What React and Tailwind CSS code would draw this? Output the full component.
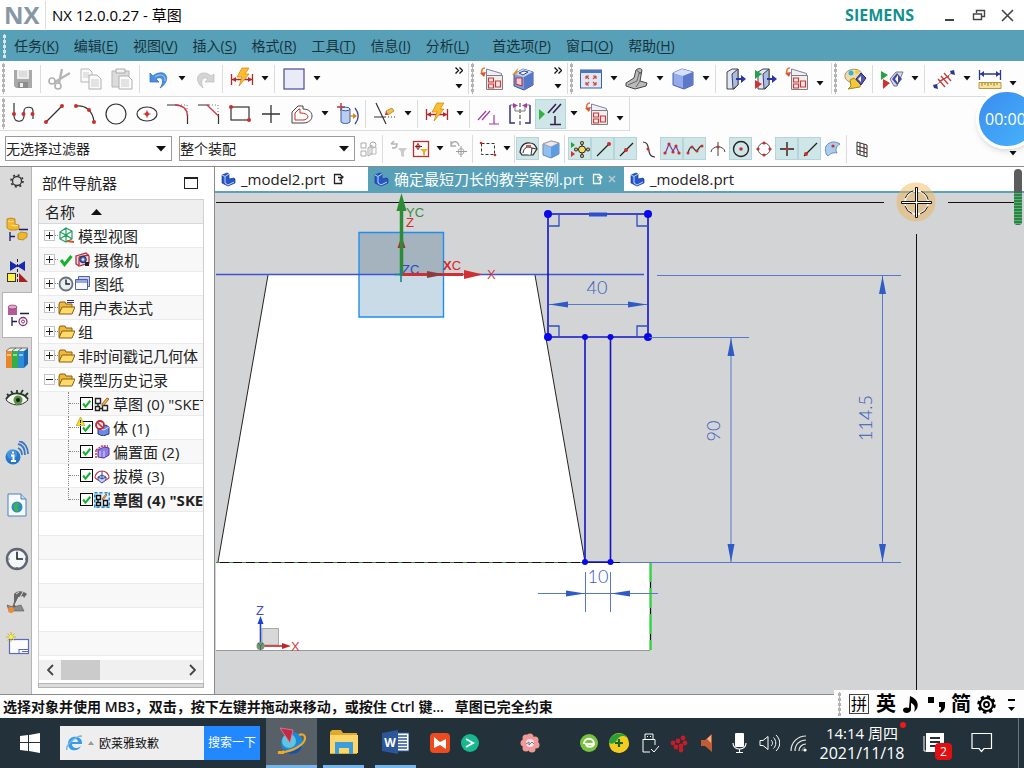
import React, { useState } from "react";
import clsx from "clsx";

// ---------- shared icon pieces ----------

const Ic = ({ s = 24, children }) => (
  <svg width={s} height={s} viewBox={`0 0 ${s} ${s}`} fill="none" className="shrink-0">
    {children}
  </svg>
);

const Dots = ({ at, r = 2, fill = "#c9302c" }) =>
  at.map(([x, y], i) => <circle key={i} cx={x} cy={y} r={r} fill={fill} />);

const Caret = () => (
  <svg width="8" height="5" viewBox="0 0 8 5">
    <path d="M0.5 0h7L4 4.5z" fill="#111" />
  </svg>
);

const SaveIcon = () => (
  <Ic>
    <path d="M3 3h18v18H5l-2-2z" fill="#a9a9a9" />
    <path d="M6 3h12v9H6z" fill="#ececec" />
    <path d="M8 5h8M8 7h8M8 9h8" stroke="#ccc" />
    <path d="M7 15h10v6H7z" fill="#8c8c8c" />
    <path d="M9 16h3v4H9z" fill="#eee" />
  </Ic>
);
const CutIcon = () => (
  <Ic>
    <path d="M22 6L7 15M14 2l-3 14" stroke="#b5b5b5" strokeWidth="2.4" />
    <circle cx="4" cy="14" r="3" stroke="#b0b0b0" strokeWidth="1.6" />
    <circle cx="10" cy="19" r="3" stroke="#b0b0b0" strokeWidth="1.6" />
  </Ic>
);
const CopyIcon = () => (
  <Ic>
    <path d="M2 2h8l3 3v10H2z" fill="#fafafa" stroke="#b8b8b8" />
    <path d="M4 6h6M4 8h6M4 10h6" stroke="#ccc" />
    <path d="M10 8h8l4 4v10H10z" fill="#fafafa" stroke="#b0b0b0" />
    <path d="M12 13h8M12 15h8M12 17h8M12 19h8" stroke="#ccc" />
  </Ic>
);
const PasteIcon = () => (
  <Ic>
    <path d="M2 4h17v16H2z" fill="#dcdcdc" stroke="#b5b5b5" />
    <path d="M6 2h9v4H6z" fill="#f2f2f2" stroke="#aaa" />
    <path d="M9 9h9l4 4v9H9z" fill="#fafafa" stroke="#b0b0b0" />
    <path d="M11 13h8M11 15h8M11 17h8M11 19h8" stroke="#ccc" />
  </Ic>
);
const UndoIcon = () => (
  <Ic>
    <path d="M3 6v9h9l-3-3c6-4 9 2 4 9 10-6 8-17-1-15-3 .5-5 2-6 3z" fill="#4a90e0" stroke="#2c68b8" strokeWidth=".7" />
    <path d="M8 10c5-4 11-2 10 4" stroke="#a9d0f5" />
  </Ic>
);
const RedoIcon = () => (
  <Ic>
    <path d="M21 7v8h-9l3-3c-5-3-8 1-5 9C1 14 4 5 12 6c3 .3 5 2 6 3z" fill="#d4d4d4" stroke="#bbb" strokeWidth=".7" />
  </Ic>
);
const RapidDimIcon = () => (
  <Ic>
    <path d="M1.500 7v11M22.500 7v11M2 12.500h20" stroke="#b02a2a" strokeWidth="1.3" />
    <path d="M2 12.500l4-2.500v5zM22 12.500l-4-2.500v5z" fill="#b02a2a" />
    <path d="M12 1h7l-4 6h4L9 19l3-9H7z" fill="#f8c030" stroke="#d88a18" strokeWidth=".8" />
  </Ic>
);
const SquareIcon = () => (
  <Ic>
    <rect x="2" y="2" width="20" height="20" fill="#e9ecf6" stroke="#4b4b96" strokeWidth="1.2" />
  </Ic>
);
const SheetIcon = () => (
  <Ic>
    <path d="M6.500 9V2l15 4.500v3" stroke="#8a7ab0" fill="#efeff4" />
    <path d="M6.500 8.500h16v14h-16z" fill="#efefef" stroke="#808080" />
    <path d="M8.500 11h5v4h-5zM15.500 14h5v6h-5zM8.500 17h5v4h-5z" stroke="#c63a3a" fill="#fbe6e6" strokeWidth="1.2" />
    <path d="M5 1C2 1 1 4 2 7" stroke="#e07a3a" strokeWidth="1.600" />
    <path d="M0 6l6-1-2 5z" fill="#d9542b" />
  </Ic>
);
const BlockIcon = () => (
  <Ic>
    <path d="M3 7l9-5 10 3v13l-9 5-10-4z" fill="#7d9fe0" stroke="#3b559f" />
    <path d="M3 7l10 3 9-5-10-3z" fill="#c9d9f7" />
    <path d="M8 6l5-2 4 1-5 3z" fill="#f8faff" stroke="#33477f" />
    <path d="M13 10v13l9-5V5z" fill="#5778c6" />
    <path d="M5 11h6v8l-6-2z" stroke="#c33" fill="#e6d3e2" strokeWidth="1.2" />
    <path d="M1 8l6-7-1 6z" fill="#e8902c" />
  </Ic>
);
const FitIcon = () => (
  <Ic>
    <rect x="1.500" y="3" width="21" height="18" fill="#dfe8f8" stroke="#3e5f9c" />
    <path d="M1 3h22v3H1z" fill="#4877c0" />
    <path d="M7 9h3M7 9v3M17 9h-3M17 9v3M7 18h3M7 18v-3M17 18h-3M17 18v-3M7 9l3 3M17 9l-3 3M7 18l3-3M17 18l-3-3" stroke="#cf4a32" strokeWidth="1.200" />
  </Ic>
);
const OrientIcon = () => (
  <Ic>
    <path d="M1 16l8-5 2-8c3-2 5-2 6 0l-2 11 7 2-1 3-11 3-9-3z" fill="#b9bcb9" stroke="#444" />
    <path d="M12 4c2 0 2 1 2 2l-2 8-9 4M15 14l-4 6" stroke="#666" />
    <circle cx="15" cy="6" r="1" fill="#555" />
  </Ic>
);
const CubeIcon = () => (
  <Ic>
    <path d="M2 6l9-4 11 3v13l-9 4-11-4z" fill="#93abea" stroke="#4a5fa8" />
    <path d="M2 6l10 3 10-4-11-3z" fill="#d6e0fa" />
    <path d="M12 9v13l10-4V5z" fill="#5d78c8" />
  </Ic>
);
const PlateOutIcon = ({ flag }) => (
  <Ic>
    <path d="M4 5l5-3h6v16l-4 4H4z" fill="#dfe6f6" stroke="#444" />
    <path d="M9 7l6-5v16l-5 4z" fill="#a9bbe6" stroke="#444" />
    <path d="M13 12h6" stroke="#2a35a8" strokeWidth="2" />
    <path d="M18 8l5 4-5 4z" fill="#2a35a8" />
    {flag && <path d="M1 3l7 4-7 5z" fill="#25a245" />}
    {flag && <path d="M1 13l7 4-7 5z" fill="#c33" />}
  </Ic>
);
const PaletteIcon = () => (
  <Ic>
    <path d="M2 8C3 1 17 0 19 7c0 5-6 4-7 7-1 2-6 2-8-1-2-1-2-3-2-5z" fill="#eedcb0" stroke="#ae9464" />
    <circle cx="8" cy="6" r="2.500" fill="#38b0d0" />
    <circle cx="14" cy="5" r="2" fill="#e8d030" />
    <path d="M5 22l3-3-1-6 4-2 4 4 4-3-2 8z" fill="#f0c838" stroke="#a88420" />
    <path d="M13 12l5-6 5 5-5 7z" fill="#5558b0" stroke="#222a66" />
    <path d="M15 12l3-3v6z" fill="#fff" />
  </Ic>
);
const SectionIcon = () => (
  <Ic>
    <path d="M10 12l6-7h7l-6 14h-3z" fill="#d8dbf0" stroke="#777" />
    <path d="M12 12l5-6 5 6-5 6z" fill="#4449a0" />
    <path d="M15 12l3-4v8z" fill="#fff" />
    <path d="M1 4l7 4-7 5z" fill="#25a245" />
    <path d="M3 12l7 4-7 6z" fill="#c33" />
  </Ic>
);
const MeasureIcon = () => (
  <Ic>
    <path d="M3 19L21 5" stroke="#888" />
    <path d="M6 12l7 8M9 9l7 8M12 6l7 8M8 14l9-5" stroke="#cc3838" strokeWidth="1.3" />
    <path d="M1 18l4-1 1 5-4-1zM18 4l4-1 1 5-4-1z" fill="#2b3890" />
  </Ic>
);
const RulerIcon = () => (
  <Ic>
    <path d="M1.500 3v10M22.500 3v10M2 7h20" stroke="#2b3890" strokeWidth="1.300" />
    <path d="M2 7l4-3v6zM22 7l-4-3v6z" fill="#2b3890" />
    <path d="M1 15.500h22v6H1z" fill="#f5e3a0" stroke="#b99a40" />
    <path d="M4 16v3M7 16v2M10 16v3M13 16v2M16 16v3M19 16v2" stroke="#a07c28" />
  </Ic>
);

// sketch tools
const ProfileIcon = () => (
  <Ic>
    <path d="M3 1v13c0 7 10 7 10 0V9c0-5 9-5 9 0v8" stroke="#333" strokeWidth="1.200" />
    <Dots at={[[3, 12], [12.500, 12], [21.500, 12]]} />
  </Ic>
);
const LineIcon = () => (
  <Ic>
    <path d="M4 20L20 4" stroke="#333" strokeWidth="1.200" />
    <Dots at={[[4, 20], [20, 4]]} />
  </Ic>
);
const ArcIcon = () => (
  <Ic>
    <path d="M3 4c10-1 17 5 18 16" stroke="#333" strokeWidth="1.200" />
    <Dots at={[[3, 4], [16, 8], [21, 20]]} />
  </Ic>
);
const CircleIcon = () => (
  <Ic>
    <circle cx="12" cy="12" r="10" stroke="#333" strokeWidth="1.200" />
  </Ic>
);
const EllipseIcon = () => (
  <Ic>
    <ellipse cx="12" cy="12" rx="10" ry="7" stroke="#333" strokeWidth="1.200" />
    <path d="M12 8.500v7M8.500 12h7" stroke="#c9302c" strokeWidth="1.200" />
    <Dots at={[[12, 12]]} />
  </Ic>
);
const CornerIcon = ({ curve }) => (
  <Ic>
    <path d="M1 3h11M21.500 12v10" stroke="#333" strokeWidth="1.200" />
    <path d="M12 3h9v9" stroke="#777" strokeDasharray="1 2" />
    <path d={curve ? "M9 3c8 0 12 3 12.500 11" : "M10 3l11.500 11"} stroke="#cf3b4a" strokeWidth="1.400" />
  </Ic>
);
const RectIcon = () => (
  <Ic>
    <rect x="3" y="5" width="18" height="13" stroke="#333" strokeWidth="1.200" />
    <Dots at={[[3, 5], [21, 18]]} />
  </Ic>
);
const PlusIcon = () => (
  <Ic>
    <path d="M12 3v18M3 12h18" stroke="#333" strokeWidth="1.300" />
  </Ic>
);
const OffsetIcon = () => (
  <Ic>
    <path d="M2 21V10l6-6h5v3c12 0 12 14 0 14z" stroke="#444" />
    <path d="M5 18v-7l4-4h1v4c11 0 9 7 3 7z" stroke="#c9302c" />
  </Ic>
);
const ProjectIcon = () => (
  <Ic>
    <path d="M1 5h8M5 1v8" stroke="#c9302c" strokeWidth="1.400" />
    <path d="M5 7h9v13c-2 2-7 2-9 0z" fill="#b9cdf3" stroke="#3c5ba8" />
    <ellipse cx="9.500" cy="7" rx="4.500" ry="1.800" fill="#e8effc" stroke="#3c5ba8" />
    <path d="M13 14h5" stroke="#d88a18" strokeWidth="1.400" />
    <path d="M17 11l4 3-4 3z" fill="#d88a18" />
    <path d="M19 6c4 5 4 11 0 16" stroke="#38489c" strokeWidth="1.300" />
  </Ic>
);
const TrimIcon = () => (
  <Ic>
    <path d="M3 1l10 21M1 15h11" stroke="#333" strokeWidth="1.200" />
    <path d="M12 15h10" stroke="#333" strokeDasharray="1 2" />
    <path d="M13 9l6-3 2 3-6 4z" fill="#efc445" stroke="#9d7a20" strokeWidth=".7" />
    <path d="M13 9l2 4-3 0z" fill="#c33" />
  </Ic>
);
const ConstraintIcon = ({ dark }) => {
  const c = dark ? "#3d1c52" : "#a63aa8";
  return (
    <Ic>
      {dark ? (
        <>
          <path d="M0 7l6 5-6 6z" fill="#2eb33c" />
          <path d="M9 11l8-9M14 11l8-9M16 14v8M11 22.500h11" stroke={c} strokeWidth="1.600" />
        </>
      ) : (
        <path d="M1 18l8-9M5 18l8-9M17 13v9M12 22h10" stroke={c} strokeWidth="1.200" />
      )}
    </Ic>
  );
};
const SymmetricIcon = () => (
  <Ic>
    <path d="M2 3v18h5M22 3v18h-5M2 4v17M22 4v17" stroke="#33337a" strokeWidth="1.500" />
    <path d="M12 1v22" stroke="#333" strokeDasharray="4 2" />
    <path d="M7 3v6h4M17 3v6h-4M2 3h4M18 3h4" stroke="#777" />
    <path d="M5 1l5 2.500-5 2.500zM19 1l-5 2.500 5 2.500z" fill="#a63aa8" />
  </Ic>
);

// ---------- selection bar icons ----------

const S = ({ children }) => <Ic s={20}>{children}</Ic>;
const FilterCubesIcon = () => (
  <S>
    <path d="M2 4h5v5H2zM2 12h5v5H2zM9 9l4-3v9l-4 2z" stroke="#aaa" />
    <circle cx="14" cy="6" r="3" stroke="#aaa" />
    <path d="M11 8h6v7h-6z" stroke="#bbb" />
  </S>
);
const FilterIcon = () => (
  <S>
    <path d="M3 5h6c0 4-2 4-5 4M3 5l3-3" stroke="#b5b5b5" strokeWidth="1.500" />
    <path d="M10 9h9l-3 4v5l-3-1v-4z" fill="#ccc" />
  </S>
);
const FilterRedIcon = () => (
  <S>
    <rect x="2.500" y="2.500" width="15" height="15" stroke="#b83232" strokeWidth="1.300" fill="#fffafa" />
    <path d="M7 4v7M4 7.500h7" stroke="#333" />
    <circle cx="7" cy="7.500" r="2" stroke="#c33" />
    <path d="M9 10h8l-3 3v4l-2-1v-3z" fill="#eeb02c" />
  </S>
);
const FilterUndoIcon = () => (
  <S>
    <path d="M2 6c2-5 7-4 8 1M2 2v5h5" stroke="#aaa" strokeWidth="1.300" />
    <path d="M12 7v11M7 12.500h11" stroke="#999" />
    <circle cx="12" cy="12.500" r="3" stroke="#aaa" />
  </S>
);
const LassoIcon = () => (
  <S>
    <rect x="3.500" y="4.500" width="13" height="11" stroke="#333" strokeDasharray="3 2" />
    <Dots at={[[3, 4], [17, 16]]} r={1.300} />
  </S>
);
const FaceIcon = () => (
  <S>
    <path d="M2 13c1-7 5-10 10-9 4 0 6 3 7 6l-4 6H4z" fill="#f2f2f2" stroke="#222" strokeWidth="1.200" />
    <path d="M5 14c1-6 5-7 9-5l-1 7M14 9l4 1" fill="#fff" stroke="#333" />
    <path d="M8 7l5 0" stroke="#c33" strokeWidth="1.500" />
  </S>
);
const ShadedIcon = () => (
  <S>
    <path d="M2 5l8-3 8 2v11l-8 4-8-3z" fill="#8cc1f2" stroke="#6b87b0" />
    <path d="M2 5l8 3 8-4-8-2z" fill="#e6ecf4" stroke="#b99" />
    <path d="M10 8v11l8-4V4z" fill="#5c9ce2" />
  </S>
);
const SnapAllIcon = () => (
  <S>
    <path d="M1 3l4 3-4 3z" fill="#2a9c3c" />
    <path d="M1 12l4 3-4 3z" fill="#c33" />
    <path d="M12 3v15M5 10.500h14" stroke="#222" />
    <circle cx="12" cy="10.500" r="3.500" stroke="#222" fill="#f5dc60" />
    <Dots at={[[12, 4], [12, 17], [6, 10.500], [18, 10.500]]} r={2} fill="#333" />
    <Dots at={[[12, 4], [12, 17], [6, 10.500], [18, 10.500]]} r={1} fill="#f1c93a" />
  </S>
);
const SnapLine = ({ at }) => (
  <S>
    <path d="M4 17L17 4" stroke="#222" strokeWidth="1.300" />
    <Dots at={[at]} />
  </S>
);
const SnapCurveIcon = () => (
  <S>
    <path d="M4 3c9 0 2 15 12 15" stroke="#333" strokeWidth="1.200" />
    <Dots at={[[9, 10]]} r={1.500} />
  </S>
);
const SnapPolyIcon = () => (
  <S>
    <path d="M3 15L7 5l4 7 3-5 3 7" stroke="#7a3aa8" strokeWidth="1.200" />
    <Dots at={[[3, 14], [7, 5], [11, 13], [14, 7], [17, 14]]} r={1.600} />
  </S>
);
const SnapSplineIcon = () => (
  <S>
    <path d="M3 14c3-11 6-4 7-3 3 3 4-5 7-4" stroke="#333" strokeWidth="1.300" />
    <Dots at={[[3, 14], [7, 8], [12, 12], [17, 7]]} r={1.500} />
  </S>
);
const SnapCrossIcon = () => (
  <S>
    <path d="M3 13c1-7 13-7 14 0M10 3v14" stroke="#444" />
    <Dots at={[[10, 8]]} r={1.500} />
  </S>
);
const SnapCenterIcon = () => (
  <S>
    <circle cx="10" cy="10" r="7.500" stroke="#222" strokeWidth="1.400" />
    <Dots at={[[10, 10]]} r={1.800} />
  </S>
);
const SnapQuadIcon = () => (
  <S>
    <circle cx="10" cy="10" r="6" stroke="#555" />
    <Dots at={[[10, 4], [10, 16], [4, 10], [16, 10]]} r={1.600} />
  </S>
);
const SnapPointIcon = () => (
  <S>
    <path d="M10 3v14M3 10h14" stroke="#222" strokeWidth="1.400" />
    <Dots at={[[10, 10]]} r={1.600} />
  </S>
);
const SnapFaceIcon = () => (
  <S>
    <path d="M3 7c4-5 9-5 14-2-4 2-5 6-3 9-4-1-7 1-9 3-3-2-3-7-2-10z" fill="#a9cdee" stroke="#6a8cb4" />
    <Dots at={[[10, 7]]} r={1.600} />
  </S>
);
const GridIcon = () => (
  <S>
    <path d="M5 3l10 3v12L5 15zM8 4v12M12 5v12M5 7l10 3M5 11l10 3" stroke="#333" />
    <Dots at={[[12, 9]]} r={1.300} />
  </S>
);

// ---------- toolbar parts ----------

const Grip = () => (
  <div className="ml-0.5 mr-0.5 h-[31px] w-[3px] shrink-0 bg-[radial-gradient(#b4b4b4_1.2px,transparent_1.3px)] bg-[length:3px_5px]" />
);
const Sep = () => <div className="ml-0.5 mr-[3px] h-7 w-px shrink-0 bg-[#dcdcdc]" />;

const Tool = ({ label, on, children }) => (
  <button
    title={label}
    className={clsx(
      "flex h-[30px] w-[31px] shrink-0 items-center justify-center",
      on && "bg-[#cfe6e9] outline outline-1 -outline-offset-1 outline-[#b5d5da]"
    )}
  >
    {children}
  </button>
);
const Snap = ({ label, on, children }) => (
  <button
    title={label}
    className={clsx(
      "flex h-[23px] w-[23px] shrink-0 items-center justify-center",
      on && "bg-[#cfe6e9] outline outline-1 -outline-offset-1 outline-[#b5d5da]"
    )}
  >
    {children}
  </button>
);
const Drop = ({ low }) => (
  <button
    aria-label="more"
    className={clsx("flex h-[30px] w-[15px] shrink-0 items-center justify-center", low && "pt-2.5")}
  >
    <Caret />
  </button>
);
const Overflow = () => (
  <button aria-label="overflow" className="ml-auto flex h-7 w-[19px] flex-col items-center justify-between pb-1 pt-0.5">
    <svg width="8" height="7" viewBox="0 0 8 7" fill="none">
      <path d="M0.500 0.500l3 3-3 3M4.500 0.500l3 3-3 3" stroke="#111" strokeWidth="1.300" />
    </svg>
    <Caret />
  </button>
);

const Combo = ({ label, value, className }) => (
  <div className={clsx("relative shrink-0", className)}>
    <select
      aria-label={label}
      className="h-[25px] w-full appearance-none border border-[#9a9a9a] bg-white p-0 text-sm text-[#222]"
    >
      <option>{value}</option>
    </select>
    <span className="pointer-events-none absolute right-1.5 top-2.5">
      <svg width="10" height="6" viewBox="0 0 10 6">
        <path d="M0 0h10L5 5.500z" fill="#111" />
      </svg>
    </span>
  </div>
);

const menus = [
  ["任务", "K"],
  ["编辑", "E"],
  ["视图", "V"],
  ["插入", "S"],
  ["格式", "R"],
  ["工具", "T"],
  ["信息", "I"],
  ["分析", "L"],
  ["首选项", "P"],
  ["窗口", "O"],
  ["帮助", "H"],
];

// ---------- resource rail ----------

const railItems = [
  {
    label: "设置",
    className: "h-[27px]",
    icon: (
      <Ic s={16}>
        <circle cx="8" cy="8" r="4.500" stroke="#333" strokeWidth="1.300" />
        <circle cx="8" cy="8" r="6" stroke="#333" strokeWidth="1.600" strokeDasharray="2 2.700" />
      </Ic>
    ),
  },
  {
    label: "装配导航器",
    className: "mt-3.5 h-[41px]",
    icon: (
      <Ic>
        <path d="M2 2l4-1 4 1v5l4 1v4l-3 1H5L2 11z" fill="#f0b92c" stroke="#b17c10" strokeWidth=".8" />
        <path d="M3 4l3 1 3-1M6 8l4 1 3-1" stroke="#fbe394" />
        <path d="M14 12.500h9M5 15v9M5 19.500h5" stroke="#1c1c70" strokeWidth="1.300" />
        <path d="M13 17l3-2 6 1v4l-4 3-5-1z" fill="#f0b92c" stroke="#b17c10" strokeWidth=".8" />
      </Ic>
    ),
  },
  {
    label: "约束导航器",
    className: "h-[43px]",
    icon: (
      <Ic>
        <path d="M5 2l8 5-8 5zM20 2l-8 5 8 5z" fill="#1a28b0" />
        <path d="M12.500 0v24" stroke="#222" strokeDasharray="3 2" />
        <rect x="2.500" y="14.500" width="8" height="8" fill="#fff04a" stroke="#333" />
        <path d="M14 14l9 9h-9z" fill="#a82020" />
      </Ic>
    ),
  },
  {
    label: "部件导航器",
    active: true,
    className: "h-[46px]",
    icon: (
      <Ic>
        <path d="M2 4h9v8H2z" fill="#b85a98" />
        <ellipse cx="6.500" cy="4" rx="4.500" ry="2" fill="#e2a8cc" stroke="#80305f" strokeWidth=".7" />
        <path d="M14 10.500h9M6 14v9M6 18.500h5" stroke="#1c1c50" strokeWidth="1.300" />
        <circle cx="17" cy="18.500" r="4" stroke="#8a3068" strokeWidth="1.300" />
        <circle cx="17" cy="18.500" r="1.500" stroke="#8a3068" />
      </Ic>
    ),
  },
  {
    label: "重用库",
    className: "h-[40px]",
    icon: (
      <Ic>
        <path d="M1 5l4-3h18v15l-4 5H1z" fill="#eee" />
        <path d="M1 5h6v17H1z" fill="#e8862c" />
        <path d="M7 5h6v17H7z" fill="#32b045" />
        <path d="M13 5h6v17h-6z" fill="#2c8ed8" />
        <path d="M19 5l4-3v16l-4 4z" fill="#1c68b0" />
        <path d="M2 9h4M8 9h4M14 9h4" stroke="#fff" />
        <path d="M1 5l4-3h18M7 5l4-3M13 5l4-3" stroke="#555" strokeWidth=".8" />
      </Ic>
    ),
  },
  {
    label: "视图",
    className: "h-[40px]",
    icon: (
      <Ic>
        <path d="M1 14c5-9 17-9 22 0-7 7-16 6-22 0z" fill="#f3f3f3" stroke="#333" />
        <circle cx="13" cy="14" r="4.500" fill="#5b9440" />
        <circle cx="13" cy="14" r="2" fill="#142010" />
        <path d="M1 13C6 5 18 6 23 13M4 10L2 8M8 8L6 5M12 7V4M16 7l2-3M20 10l3-3" stroke="#2a3a2a" strokeWidth="1.800" />
      </Ic>
    ),
  },
  {
    label: "信息",
    className: "mt-1.5 h-[54px] pt-1",
    icon: (
      <Ic>
        <circle cx="8" cy="16" r="7.500" fill="#2478cc" />
        <circle cx="7" cy="13" r="5" fill="#6bb0ec" opacity=".5" />
        <path d="M8 10.500v2M6 14.500h2.500v5M6 20h5" stroke="#fff" strokeWidth="2" />
        <path d="M13 7c2 1 4 4 4 7M13 3c5 1 7 6 7 11M14 0c6 1 9 7 9 13" stroke="#3c78c0" strokeWidth="1.800" />
      </Ic>
    ),
  },
  {
    label: "文档",
    className: "h-[54px]",
    icon: (
      <Ic>
        <path d="M3 1h13l5 5v17H3z" fill="#f6faff" stroke="#4a80c0" />
        <path d="M16 1v5h5" fill="#c6d8f0" stroke="#4a80c0" />
        <circle cx="12" cy="14" r="5.500" fill="#2f8cc0" />
        <path d="M9 11c4-3 6 0 4 2s2 3 0 5-4-1-4-3z" fill="#43b04a" />
      </Ic>
    ),
  },
  {
    label: "历史记录",
    className: "h-[53px]",
    icon: (
      <Ic>
        <circle cx="12" cy="12" r="10" fill="#f4f7fb" stroke="#5e6672" strokeWidth="2.400" />
        <path d="M12 5v7h6" stroke="#222" strokeWidth="1.600" />
        <path d="M12 3.500v1M12 20v1M3.500 12h1M20 12h1" stroke="#333" />
      </Ic>
    ),
  },
  {
    label: "加工",
    className: "h-[33px]",
    icon: (
      <Ic>
        <path d="M9 4c4-4 9-3 13 0l-3 4-1-2-4 1-4 8 3 5H6l3-8z" fill="#666" />
        <path d="M11 4l3-2M18 2l-3 5" stroke="#ddd" />
        <path d="M2 15l6 2 8-2 3 6H4z" fill="#8a8a8a" stroke="#555" strokeWidth=".6" />
        <circle cx="6" cy="20" r="3" fill="#ee8a30" />
        <path d="M14 7l-4 8" stroke="#eee" />
      </Ic>
    ),
  },
  {
    label: "新建",
    className: "h-[50px]",
    icon: (
      <Ic>
        <rect x="4.500" y="8.500" width="19" height="14" fill="#fdfdff" stroke="#6068b8" strokeWidth="1.200" />
        <path d="M14 18.500h9M14 18v4M17 20.500h6" stroke="#6068b8" />
        <path d="M6 1v10M1 6h10M2.500 2.500l7 7M9.500 2.500l-7 7" stroke="#c9b820" />
        <circle cx="6" cy="6" r="2" fill="#f6ee50" />
      </Ic>
    ),
  },
];

// ---------- part navigator ----------

const Folder = ({ eq }) => (
  <Ic s={17}>
    <path d="M1 5l1-2h5l1 2h6v9H1z" fill="#f0b93a" stroke="#8a5c10" />
    <path d="M1 15l3-7h13l-3 7z" fill="#ffdc6a" stroke="#8a5c10" />
    {eq && <path d="M9 1.500h7M9 3.500h7" stroke="#3a3a78" />}
  </Ic>
);

const Tick = ({ s = 16 }) => (
  <svg width={s} height={s} viewBox="0 0 16 16" fill="none" className="shrink-0">
    <path d="M3 8l3.500 4.500L13.500 4" stroke="#18b030" strokeWidth="3" />
  </svg>
);

const ViewsIcon = () => (
  <Ic s={17}>
    <path d="M2 5l6-4 6 3v8l-6 3-6-3zM2 5l6 3 6-4M8 8v7M2 12l6-4 6 4M8 1v7" stroke="#22a060" strokeWidth="1.200" />
    <path d="M9 14l7 1" stroke="#d4542c" strokeWidth="2" />
  </Ic>
);
const CameraIcon = () => (
  <Ic s={17}>
    <path d="M2 5l10-3 3 3v7l-10 3-3-2zM5 6l10-2M5 6v8" fill="#f2d8dc" stroke="#b03040" strokeWidth="1.300" />
    <circle cx="9" cy="8.500" r="3.300" fill="#4a68c0" stroke="#203060" />
    <circle cx="9" cy="8.500" r="1.300" fill="#eef" />
    <path d="M11 11h4v4h-4z" fill="#222" />
  </Ic>
);
const ClockSmall = () => (
  <Ic s={16}>
    <circle cx="8" cy="8" r="6.500" fill="#e9eef3" stroke="#67707c" strokeWidth="1.800" />
    <path d="M8 3.500V8h4" stroke="#222" strokeWidth="1.400" />
  </Ic>
);
const SheetsIcon = () => (
  <Ic s={17}>
    <path d="M4.500 1.500h11v10h-11z" fill="#c6d0ee" stroke="#5060a0" />
    <path d="M1.500 4.500h12v10h-12z" fill="#f8faff" stroke="#5060a0" />
    <path d="M2 5h11v3H2z" fill="#98a8dc" />
  </Ic>
);
const SketchIcon = () => (
  <Ic s={16}>
    <path d="M1.500 2.500h5v5h-5zM1.500 10.500h4v4h-4zM8.500 9.500h5v5h-5zM4 8v2M6 12.500h2" stroke="#222" strokeWidth="1.400" />
    <path d="M8 8l5-6 2 1-5 6-2 .500z" fill="#f0c040" stroke="#a03818" strokeWidth=".8" />
  </Ic>
);
const BodyIcon = () => (
  <Ic s={16}>
    <path d="M4 8l8-3 3 2v7l-6 2-5-2z" fill="#6c8ae0" stroke="#26388c" />
    <path d="M4 8l6 2 5-3" stroke="#dde" />
    <circle cx="6" cy="5" r="4" stroke="#c22838" strokeWidth="1.800" fill="#f5e4e8" />
    <path d="M3.500 2.500l5 5" stroke="#c22838" strokeWidth="1.600" />
  </Ic>
);
const OffsetFaceIcon = () => (
  <Ic s={16}>
    <path d="M4 6l6-3 5 1v7l-5 3-6-1z" fill="#8c7ce4" stroke="#4838a0" />
    <path d="M2 6v8M2 6l6-4 6 0" stroke="#c23048" strokeDasharray="2 1" strokeWidth="1.400" />
    <path d="M6 7v6M10 7v6" stroke="#dcd4fa" />
  </Ic>
);
const DraftIcon = () => (
  <Ic s={16}>
    <path d="M4 9l4-2 4 2v3l-4 3-4-3z" fill="#c9d0f4" stroke="#38489c" />
    <path d="M1 10c0-4 3-7 7-7s7 3 7 7M1 10l3 2M15 10l-3 2" stroke="#c23848" strokeWidth="1.200" />
    <path d="M8 3v8M4 9l4 2 4-2" stroke="#38489c" />
  </Ic>
);
const ActiveSketchIcon = () => (
  <Ic s={16}>
    <path d="M0 0h16v16H0z" fill="#dff0fb" />
    <path d="M.5 .5h15v15H.5z" stroke="#1b8ad0" strokeWidth="2" strokeDasharray="3 2" />
    <path d="M2.500 3.500h4v4h-4zM2.500 10.500h4v3h-4zM9.500 8.500h4v5h-4zM4 8v2" stroke="#111" strokeWidth="1.400" />
    <path d="M8 7l4-5 1 1-4 5z" fill="#f0c040" stroke="#a03818" strokeWidth=".7" />
  </Ic>
);

const treeRows = [
  { text: "模型视图", icons: <ViewsIcon /> },
  { text: "摄像机", icons: <><Tick /><CameraIcon /></> },
  { text: "图纸", icons: <><ClockSmall /><SheetsIcon /></> },
  { text: "用户表达式", icons: <Folder eq /> },
  { text: "组", icons: <Folder /> },
  { text: "非时间戳记几何体", icons: <Folder /> },
  { text: "模型历史记录", icons: <Folder />, open: true },
  { text: '草图 (0) "SKETCH_000"', icons: <SketchIcon />, child: true },
  { text: "体 (1)", icons: <BodyIcon />, child: true, warn: true },
  { text: "偏置面 (2)", icons: <OffsetFaceIcon />, child: true },
  { text: "拔模 (3)", icons: <DraftIcon />, child: true },
  { text: '草图 (4) "SKETCH_001"', icons: <ActiveSketchIcon />, child: true, bold: true, last: true },
];

const TreeRow = ({ row }) => {
  const [checked, setChecked] = useState(true);
  if (row.child) {
    return (
      <div className="flex h-[23px] items-center pl-[29px]">
        <div
          className={clsx("w-px shrink-0 self-start border-l border-dotted border-[#888]", row.last ? "h-3" : "h-6")}
        />
        <div className="mr-px w-2.5 shrink-0 border-t border-dotted border-[#888]" />
        <label className={clsx("flex shrink-0 items-center whitespace-nowrap", row.bold && "font-bold")}>
          <span className="relative mr-px flex h-[13px] w-[13px] shrink-0">
            <input
              type="checkbox"
              checked={checked}
              onChange={() => setChecked(!checked)}
              className="h-[13px] w-[13px] appearance-none border border-black bg-white"
            />
            {checked && (
              <span className="pointer-events-none absolute left-px top-px">
                <Tick s={11} />
              </span>
            )}
            {row.warn && (
              <svg width="9" height="9" viewBox="0 0 9 9" className="absolute -left-1 -top-1">
                <path d="M4.500 0L9 9H0z" fill="#f8dc30" stroke="#a89010" strokeWidth=".6" />
                <path d="M4.500 3v3M4.500 7v1" stroke="#222" />
              </svg>
            )}
          </span>
          {row.icons}
          <span className="ml-[3px]">{row.text}</span>
        </label>
      </div>
    );
  }
  return (
    <div className="flex h-[23px] items-center whitespace-nowrap pl-[5px]">
      <button
        aria-label={row.text}
        className="flex h-[11px] w-[11px] shrink-0 items-center justify-center border border-[#c4c4c4] bg-white"
      >
        <svg width="7" height="7" viewBox="0 0 7 7">
          <path d={row.open ? "M0 3.500h7" : "M0 3.500h7M3.500 0v7"} stroke="#222" />
        </svg>
      </button>
      <div className="w-[3px] shrink-0 border-t border-dotted border-[#888]" />
      {row.icons}
      <span className="ml-[3px]">{row.text}</span>
    </div>
  );
};

const Chevron = ({ d }) => (
  <svg width="7" height="12" viewBox="0 0 7 12" fill="none">
    <path d={d} stroke="#444" strokeWidth="1.800" />
  </svg>
);

const Navigator = () => (
  <section className="flex w-[183px] shrink-0 flex-col border-r border-[#8c8c8c] bg-white pb-1.5 pl-1.5 pr-2.5">
    <div className="flex h-8 items-center justify-between pl-1 pr-1.5 text-[15px]">
      部件导航器
      <button aria-label="窗口" className="h-3 w-3.5 border border-t-2 border-[#222]" />
    </div>
    <div className="flex min-h-0 flex-1 flex-col overflow-hidden border border-b-0 border-[#d0d0d0]">
      <table className="block w-full text-[15px] leading-[22px]">
        <thead className="block">
          <tr className="block">
            <th className="flex h-6 items-center gap-4 border-b border-[#d8d8d8] bg-[#efefef] pl-1.5 font-normal">
              名称
              <svg width="11" height="6" viewBox="0 0 11 6">
                <path d="M5.500 0L11 6H0z" fill="#111" />
              </svg>
            </th>
          </tr>
        </thead>
        <tbody className="block">
          {treeRows.map((row, i) => (
            <tr key={i} className="block border-b border-[#ebebeb] odd:bg-white even:bg-[#f8f8f8]">
              <td className="block overflow-hidden p-0">
                <TreeRow row={row} />
              </td>
            </tr>
          ))}
          {[0, 1, 2, 3, 4, 5].map((i) => (
            <tr key={i} className="block h-6 border-b border-[#ebebeb] odd:bg-white even:bg-[#f8f8f8]">
              <td />
            </tr>
          ))}
        </tbody>
      </table>
      <div className="mb-[3px] mt-auto flex h-5 items-center bg-[#f0f0f0]">
        <button aria-label="左" className="flex w-[22px] justify-center">
          <Chevron d="M6 1L1 6l5 5" />
        </button>
        <div className="h-5 w-[39px] bg-[#cbcbcb]" />
        <button aria-label="右" className="ml-auto flex w-[22px] justify-center">
          <Chevron d="M1 1l5 5-5 5" />
        </button>
      </div>
    </div>
    <div className="h-[5px] shrink-0 border border-[#b4b4b4] bg-[#dcdcdc]" />
  </section>
);

// ---------- graphics window ----------

const PartIcon = () => (
  <Ic s={15}>
    <path d="M1 3l5-2 2 1v5l5-1 1 1v4l-7 3-6-3z" fill="#2458c8" stroke="#1a3a90" strokeWidth=".7" />
    <path d="M1 3l3 1.500 4-2.500M4 5v6l3 2 6-3" stroke="#c2d6fa" />
  </Ic>
);
const NoteIcon = () => (
  <Ic s={12}>
    <path d="M8 1.500H1.500v9h7V7M7 1.500l3 2.500-3.500 3.500M5 4.500h5" stroke="currentColor" strokeWidth="1.300" />
  </Ic>
);

const files = [
  { name: "_model2.prt", note: true, className: "w-[153px]" },
  { name: "确定最短刀长的教学案例.prt", note: true, active: true, className: "w-64" },
  { name: "_model8.prt", className: "flex-1" },
];

const RightMark = ({ d }) => <path d={d} stroke="#2c50c0" strokeWidth="1.300" />;

const Drawing = () => (
  <svg width="100%" height="100%" fill="none" className="absolute inset-0 overflow-visible">
    <g transform="translate(-215 -193)">
      {/* part section */}
      <path d="M268 275H535L585 562H218z" fill="#fff" />
      <path d="M268 275L218 562M535 275L585 562" stroke="#222" />
      <path d="M216 562h434v88H216z" fill="#fff" />
      <path d="M216 650.500h434" stroke="#999" />
      <path d="M216 562.500h405" stroke="#111" />
      <path d="M216 562.500h370" stroke="#3c8a3c" strokeDasharray="4 9" />
      <path d="M650.500 562v88" stroke="#111" strokeWidth="1.300" />
      <path d="M650.500 562v88" stroke="#22e030" strokeWidth="2" strokeDasharray="20 6" />
      <path d="M216 202.500h668M948 202.500h70M916.500 234v456" stroke="#111" />

      {/* datum plane */}
      <path d="M359 232h85v43h-85z" fill="#a5b3bf" />
      <path d="M359 275h85v42h-85z" fill="#c9dbe6" />
      <path d="M359 232.500h84.500v84.500h-84.500z" stroke="#1f8fee" strokeWidth="1.400" />
      <path d="M216 274.500h428" stroke="#3c54d8" strokeWidth="1.300" />

      {/* axes */}
      <path d="M401.500 236l4 12h-8z" fill="#a83030" />
      <g fontFamily="Liberation Sans" fontSize="13">
        <text x="406" y="217" fill="#3c8c40">YC</text>
        <text x="406" y="227" fill="#d82828">Z</text>
        <text x="402" y="274" fill="#2848c8">ZC</text>
        <text x="443" y="270" fill="#d82828"><tspan fontWeight="bold">X</tspan>C</text>
        <text x="487" y="279" fill="#d04040">X</text>
        <text x="256" y="615" fill="#4050d0">Z</text>
        <text x="291" y="651" fill="#d04040">X</text>
      </g>
      <path d="M401.500 276v-66" stroke="#2c8c34" strokeWidth="3.500" />
      <path d="M401.500 193l5 18h-10z" fill="#2c8c34" />
      <path d="M401 274.500h62" stroke="#d03034" strokeWidth="3" />
      <path d="M427 271l18 3.500-18 3.500z" fill="#8c3c40" />
      <path d="M464 270l19 4.500-19 4.500z" fill="#d03034" />
      <path d="M401 268v14M394 274.500h9" stroke="#188888" strokeWidth="1.600" />

      {/* cutter holder + shank */}
      <path d="M548 214h100v123H548zM585 337v225h25.500V337M585 562h26" stroke="#1414c4" strokeWidth="1.600" />
      <path d="M589 214.500h18" stroke="#2c50d0" strokeWidth="4" />
      <RightMark d="M559 215v11h-11M637 215v11h11M559 337v-11h-11M637 337v-11h11" />
      <Dots at={[[548, 214], [648, 214], [548, 337], [648, 337]]} r={4} fill="#0808e8" />
      <Dots at={[[585, 337], [610.500, 337], [585, 562], [610.500, 562]]} r={3} fill="#0808e8" />

      {/* dimensions */}
      <g stroke="#5878cc">
        <path d="M549 304.500h98M657 275.500h244M649 337.500h100M731 338v224M882.500 276v286M620 562.500h281" />
        <path d="M585.500 572v40M610.500 572v40M538 593.500h120" />
      </g>
      <g fill="#2f5cc4">
        <path d="M549 304.500l19-3v6zM647 304.500l-19-3v6z" />
        <path d="M731 338l-3.500 18h7zM731 562l-3.500-18h7z" />
        <path d="M882.500 276l-3.500 18h7zM882.500 562l-3.500-18h7z" />
        <path d="M585 593.500l-19-3v6zM611 593.500l19-3v6z" />
      </g>
      <g fill="#3a5cbc" textAnchor="middle" className="font-['Lato'] text-[18px] font-light">
        <text x="597" y="294">40</text>
        <text x="598" y="583">10</text>
        <text transform="translate(720 431) rotate(-90)">90</text>
        <text transform="translate(872 418) rotate(-90)">114.5</text>
      </g>

      {/* view triad */}
      <path d="M262 628.500h16.500V645H262z" fill="#d8d8d8" stroke="#aaa" />
      <path d="M260.500 645v-22" stroke="#2040d0" strokeWidth="1.600" />
      <path d="M260.500 616l3 8h-6z" fill="#2040d0" />
      <path d="M262 646h22" stroke="#c02828" strokeWidth="1.600" />
      <path d="M282 643l9 3-9 3z" fill="#c02828" />
      <circle cx="260.500" cy="646" r="4" fill="#7c9080" />
      <path d="M258 643l2.500 3 2.500-3M260.500 646v4" stroke="#2c7c34" />

      {/* pointer */}
      <circle cx="916" cy="202" r="19.500" fill="#f2b24c" fillOpacity=".45" />
      <circle cx="916.500" cy="202.500" r="11.500" stroke="#fff" strokeWidth="1.600" />
      <circle cx="916.500" cy="202.500" r="12" stroke="#111" strokeDasharray="11 8" strokeDashoffset="-4" />
      <path d="M915.500 187.500h2v14h14v2h-14v14h-2v-14h-14v-2h14z" fill="#fff" stroke="#111" />
    </g>
  </svg>
);

const Graphics = () => (
  <section className="relative flex min-w-0 flex-1 flex-col">
    <div className="flex h-[26px] shrink-0 border-b-2 border-[#5ba2b8] bg-white">
      {files.map((f) => (
        <div
          key={f.name}
          className={clsx(
            "flex items-center whitespace-nowrap pl-1.5 text-[15px]",
            f.className,
            f.active ? "bg-[#57a0b8] text-white" : "bg-white text-[#222]"
          )}
        >
          <PartIcon />
          <button className="ml-[5px] mr-2">{f.name}</button>
          {f.note && <NoteIcon />}
          {f.active && (
            <button aria-label="关闭" className="ml-1 text-[#b9c9cf]">
              <Ic s={8}>
                <path d="M1 1l6 6M7 1l-6 6" stroke="currentColor" strokeWidth="1.600" />
              </Ic>
            </button>
          )}
        </div>
      ))}
    </div>
    <div className="relative min-h-0 flex-1 bg-[#d2d4d5]">
      <Drawing />
    </div>
    <div className="absolute right-0.5 top-0.5 h-14 w-2 overflow-hidden rounded-full bg-[#5c5c5c]">
      <div className="mt-6 h-9 bg-[repeating-linear-gradient(#3cc068_0_1px,#3a7a4c_1px_3px)]" />
    </div>
  </section>
);

// ---------- taskbar ----------

const TrayButton = ({ label, children, className = "w-[30px]" }) => (
  <button title={label} className={clsx("flex h-full shrink-0 items-center justify-center", className)}>
    {children}
  </button>
);

const Taskbar = () => (
  <footer className="flex h-[50px] shrink-0 items-center bg-[#22313a] text-white">
    <TrayButton label="开始" className="w-[60px]">
      <Ic s={20}>
        <path d="M0 3l8-1v7H0zM9 2l11-2v9H9zM0 10h8v8l-8-1zM9 10h11v10L9 18z" fill="#fff" />
      </Ic>
    </TrayButton>
    <form className="flex h-[34px] w-[200px] items-center bg-[#eee]" onSubmit={(e) => e.preventDefault()}>
      <div className="flex items-center gap-1 pl-1.5">
        <Ic s={18}>
          <path d="M2 10c0-10 15-9 14 0H6c0 5 6 5 9 2-2 6-13 6-13-2z" fill="#3a9ce8" />
          <path d="M6 8h6c0-4-6-4-6 0z" fill="#eee" />
          <path d="M1 16c-2-4 8-14 15-14" stroke="#6cb8f0" strokeWidth="1.400" />
        </Ic>
        <svg width="6" height="4" viewBox="0 0 6 4">
          <path d="M3 0l3 4H0z" fill="#999" />
        </svg>
      </div>
      <input
        aria-label="搜索"
        defaultValue="欧莱雅致歉"
        className="ml-[5px] h-full min-w-0 flex-1 bg-transparent text-xs text-[#111] outline-none"
      />
      <button className="h-full w-14 shrink-0 bg-[#2288ff] text-xs">搜索一下</button>
    </form>
    <button title="NX" className="ml-1.5 flex h-full w-[51px] items-center justify-center border-b-3 border-[#76b5ea] bg-[#566066]">
      <Ic s={30}>
        <circle cx="15" cy="16" r="11" fill="#1c88d8" />
        <circle cx="12" cy="14" r="7" fill="#7ee0e8" opacity=".7" />
        <path d="M6 22c6 3 15 1 19-5 1 5-4 10-10 10-4 0-7-2-9-5z" fill="#1c50a0" />
        <path d="M1 25c14 1 28-8 27-15-1-3-4-3-6-2" stroke="#f0a828" strokeWidth="2.200" />
        <path d="M0 27l7-4v4z" fill="#f0a828" />
        <path d="M3 1l13 2-3 13z" fill="#c42848" stroke="#f2889c" strokeWidth=".7" />
      </Ic>
    </button>
    <button title="文件资源管理器" className="ml-1.5 flex h-full w-[41px] items-center justify-center border-b-3 border-[#76b5ea]">
      <Ic s={28}>
        <path d="M0 4l2-2h9l2 3h14v21H0z" fill="#e0a82c" />
        <path d="M0 7h28v18H0z" fill="#fbd668" />
        <path d="M5 14h18v12h-4v-6H9v6H5z" fill="#3c9ce0" />
      </Ic>
    </button>
    <button title="Word" className="ml-[11px] flex h-full w-[41px] items-center justify-center border-b-3 border-[#76b5ea]">
      <svg width="27" height="24" viewBox="0 0 27 24">
        <path d="M13 3h14v18H13z" fill="#fff" stroke="#2b579a" />
        <path d="M16 6h9M16 9h9M16 12h9M16 15h9M16 18h9" stroke="#2b579a" strokeWidth="1.300" />
        <path d="M0 3l16-3v24L0 21z" fill="#2b579a" />
        <text x="8" y="17" textAnchor="middle" fill="#fff" fontFamily="Open Sans" fontSize="12" fontWeight="bold">W</text>
      </svg>
    </button>
    <TrayButton label="播放器" className="ml-[9px] w-[30px]">
      <Ic s={20}>
        <rect width="20" height="20" rx="4" fill="#ee4a20" />
        <path d="M4 4l6 5 6-3v10l-6-4-6 3z" fill="#fff" />
      </Ic>
    </TrayButton>
    <TrayButton label="远程">
      <Ic s={18}>
        <circle cx="9" cy="9" r="9" fill="#17b890" />
        <path d="M5 5l7 4-7 4" stroke="#fff" strokeWidth="2" />
      </Ic>
    </TrayButton>
    <TrayButton label="花" className="ml-[30px] w-[30px]">
      <Ic s={20}>
        <Dots at={[[10, 4], [15, 7], [16, 12], [12, 16], [6, 15], [4, 10], [6, 5]]} r={3.500} fill="#f09a98" />
        <circle cx="10" cy="10" r="4" fill="#f8e0e0" />
        <path d="M6 11l3-2v3l3-3M12 9l2 2" stroke="#5a78a8" />
      </Ic>
    </TrayButton>

    <div className="ml-auto flex h-full shrink-0 items-center">
      <TrayButton label="浏览器">
        <Ic s={20}>
          <circle cx="10" cy="10" r="9" fill="#78c43c" />
          <path d="M5 11c0-7 10-7 10 0H7c1 4 6 3 8 1" stroke="#fff" strokeWidth="2" />
        </Ic>
      </TrayButton>
      <TrayButton label="安全卫士">
        <Ic s={20}>
          <circle cx="10" cy="10" r="10" fill="#f4cc20" />
          <path d="M0 10C0 0 14-3 19 5 13 1 10 4 8 7c-2 3-5 5-8 3z" fill="#28a038" />
          <path d="M20 10c0 10-14 13-19 5 6 4 9 1 11-2 2-3 5-5 8-3z" fill="#f4cc20" />
          <path d="M10 6v8M6 10h8" stroke="#126828" strokeWidth="2.200" />
        </Ic>
      </TrayButton>
      <TrayButton label="USB">
        <Ic s={20}>
          <path d="M6 6V1h8v5M4 6.500h12V12M4 6v13h7M8 3.500h1M11 3.500h1M12 16l3 3 5-6" stroke="#fff" />
        </Ic>
      </TrayButton>
      <TrayButton label="树莓">
        <Ic s={20}>
          <Dots at={[[4, 10], [9, 8], [14, 5], [16, 10], [12, 13], [7, 14], [12, 17]]} r={2.400} fill="#c41c28" />
        </Ic>
      </TrayButton>
      <TrayButton label="声卡">
        <Ic s={20}>
          <path d="M2 7h4l7-6v18l-7-6H2z" fill="#c05c38" />
          <path d="M8 6l4-4v8z" fill="#f0ac84" />
        </Ic>
      </TrayButton>
      <TrayButton label="麦克风">
        <Ic s={20}>
          <rect x="6" y="0" width="9" height="14" rx="1" fill="#fff" />
          <path d="M4 10c0 8 13 8 13 0M10.500 16v3M7 19.500h7" stroke="#fff" strokeWidth="1.200" />
        </Ic>
      </TrayButton>
      <TrayButton label="音量">
        <Ic s={22}>
          <path d="M2 8.500h3l5-4v13l-5-4H2zM13 8c2 2 2 4 0 6M15.500 5.500c3 3 3 8 0 11M18 3c5 5 5 11 0 16" stroke="#fff" />
        </Ic>
      </TrayButton>
      <TrayButton label="网络">
        <Ic s={20}>
          <path d="M2 18C2 9 9 3 17 3M6 18c0-7 5-11 11-11M10 18c0-4 3-7 7-7" stroke="#e8e8e8" strokeWidth="1.200" />
          <circle cx="16" cy="17" r="1.600" fill="#fff" />
          <path d="M13 18c0-2 1-3 3-4" stroke="#999" />
        </Ic>
      </TrayButton>
      <button className="relative w-24 whitespace-nowrap text-center text-[15px] leading-5">
        <span className="block">14:14 周四</span>
        <span className="block text-base leading-5">2021/11/18</span>
        <span className="absolute -top-px right-1 h-1.5 w-1.5 rounded-full bg-[#f01818]" />
      </button>
      <button title="资讯" className="relative flex h-full w-12 items-center justify-center">
        <Ic s={22}>
          <path d="M3 1h18v19H3z" fill="#fff" />
          <path d="M1 4v15h3" stroke="#fff" />
          <path d="M7 6h10M7 10h10M7 14h6" stroke="#22313a" strokeWidth="2" />
        </Ic>
        <span className="absolute bottom-2 right-1.5 flex h-[17px] w-[17px] items-center justify-center rounded-sm bg-[#e01010] text-xs">
          2
        </span>
      </button>
      <TrayButton label="通知" className="mr-3 w-12">
        <Ic s={22}>
          <path d="M1 1.500h19.500v15H13l-2.500 3-2.500-3H1z" stroke="#fff" strokeWidth="1.200" />
        </Ic>
      </TrayButton>
      <div className="h-full w-1.5 border-l border-[#6c777e]" />
    </div>
  </footer>
);

// ---------- page ----------

const ImeBar = () => (
  <div className="absolute bottom-0 right-0 flex h-7 w-[190px] items-center gap-1.5 bg-[#fdfdfd] pl-1 text-xl font-bold leading-7 text-black">
    <div className="mr-0.5 h-6 w-[3px] bg-[radial-gradient(#b4b4b4_1.2px,transparent_1.3px)] bg-[length:3px_5px]" />
    <button className="mr-px flex h-5 w-5 items-center justify-center border border-[#444] text-base font-normal leading-4">
      拼
    </button>
    <button>英</button>
    <Ic s={19}>
      <path d="M8 1c9 3 10 12 4 16 2-5 0-8-3-9v7c-1 4-8 4-8 0 0-3 4-3 6-2z" fill="#000" />
    </Ic>
    <Ic s={18}>
      <path d="M1 2h6v6H1zM12 7h6v4c0 4-3 6-5 7l-1-2c2-1 2-2 2-4h-2z" fill="#000" />
    </Ic>
    <button>简</button>
    <Ic s={19}>
      <circle cx="9.500" cy="9.500" r="6.500" stroke="#000" strokeWidth="2.200" />
      <circle cx="9.500" cy="9.500" r="8" stroke="#000" strokeWidth="2.500" strokeDasharray="3.300 3" />
      <circle cx="9.500" cy="9.500" r="2.500" stroke="#000" strokeWidth="1.800" />
    </Ic>
    <svg width="7" height="13" viewBox="0 0 7 13" className="ml-1.5">
      <path d="M0 1h7v2H0zM0 9h7l-3.500 4z" fill="#000" />
    </svg>
  </div>
);

const App = () => {
  return (
    <div className="relative flex h-screen flex-col overflow-hidden bg-[#fdfdfd] font-['Open_Sans','Noto_Sans_CJK_SC',sans-serif] text-[#222]">
      <header className="flex h-[30px] shrink-0 items-center bg-white">
        <span className="w-[46px] border-r border-[#ddd] pl-1 text-2xl font-bold leading-7 text-[#8797a3]">NX</span>
        <h1 className="ml-1.5 text-[15px] text-black">NX 12.0.0.27 - 草图</h1>
        <span className="ml-auto mr-7 text-base font-bold text-[#10918f]">SIEMENS</span>
        <div className="flex items-center text-[#444]">
          <button aria-label="最小化" className="flex w-[30px] items-end">
            <Ic s={14}>
              <path d="M3 12h9" stroke="currentColor" strokeWidth="2" />
            </Ic>
          </button>
          <button aria-label="还原" className="w-[29px]">
            <Ic s={14}>
              <path d="M4.500 5V2.500h8v6H9M1.500 6h8v5.500h-8z" stroke="currentColor" strokeWidth="1.400" />
            </Ic>
          </button>
          <button aria-label="关闭" className="mr-2.5">
            <Ic s={13}>
              <path d="M1 1l11 11M12 1L1 12" stroke="currentColor" strokeWidth="1.600" />
            </Ic>
          </button>
        </div>
      </header>

      <nav className="flex h-[31px] shrink-0 items-center gap-[15px] bg-[#57a0b8] text-sm text-[#16323c]">
        <div className="-mr-[7px] ml-[3px] h-6 w-[3px] bg-[radial-gradient(#d4e8ee_1.2px,transparent_1.3px)] bg-[length:3px_5px]" />
        {menus.map(([name, key]) => (
          <button key={name} className={clsx("whitespace-nowrap", key === "P" && "ml-2")}>
            {name}(<u className="underline-offset-2">{key}</u>)
          </button>
        ))}
      </nav>

      {/* standard toolbar */}
      <div className="flex h-9 shrink-0 items-center border-b border-[#dcdcdc]">
        <div className="flex w-[469px] shrink-0 items-center border-r border-[#dcdcdc]">
          <Grip />
          <Tool label="保存"><SaveIcon /></Tool>
          <Sep />
          <Tool label="剪切"><CutIcon /></Tool>
          <Tool label="复制"><CopyIcon /></Tool>
          <Tool label="粘贴"><PasteIcon /></Tool>
          <Sep />
          <Tool label="撤销"><UndoIcon /></Tool>
          <Drop />
          <Tool label="重做"><RedoIcon /></Tool>
          <Sep />
          <Tool label="快速尺寸"><RapidDimIcon /></Tool>
          <Drop />
          <Sep />
          <Tool label="显示"><SquareIcon /></Tool>
          <Drop />
          <Overflow />
        </div>
        <div className="flex w-[99px] shrink-0 items-center border-r border-[#dcdcdc]">
          <Grip />
          <Tool label="图层"><SheetIcon /></Tool>
          <Tool label="块"><BlockIcon /></Tool>
          <Overflow />
        </div>
        <div className="flex w-[264px] shrink-0 items-center border-r border-[#dcdcdc]">
          <Grip />
          <Tool label="适合窗口"><FitIcon /></Tool>
          <Drop />
          <Tool label="定向视图"><OrientIcon /></Tool>
          <Drop />
          <Tool label="着色"><CubeIcon /></Tool>
          <Drop />
          <Sep />
          <Tool label="剖切"><PlateOutIcon /></Tool>
          <Tool label="编辑截面"><PlateOutIcon flag /></Tool>
          <Tool label="图层设置"><SheetIcon /></Tool>
          <Drop low />
        </div>
        <div className="flex shrink-0 items-center">
          <Grip />
          <Tool label="编辑显示"><PaletteIcon /></Tool>
          <Sep />
          <Tool label="显示和隐藏"><SectionIcon /></Tool>
          <Drop />
          <Sep />
          <Tool label="测量"><MeasureIcon /></Tool>
          <Drop />
          <Tool label="测量距离"><RulerIcon /></Tool>
          <Drop low />
        </div>
      </div>

      {/* sketch toolbar */}
      <div className="flex shrink-0">
        <div className="flex h-[34px] items-center border-b border-r border-[#dcdcdc] pr-0.5">
          <Grip />
          <Tool label="轮廓"><ProfileIcon /></Tool>
          <Tool label="直线"><LineIcon /></Tool>
          <Tool label="圆弧"><ArcIcon /></Tool>
          <Tool label="圆"><CircleIcon /></Tool>
          <Tool label="椭圆"><EllipseIcon /></Tool>
          <Tool label="圆角"><CornerIcon curve /></Tool>
          <Tool label="倒斜角"><CornerIcon /></Tool>
          <Tool label="矩形"><RectIcon /></Tool>
          <Tool label="点"><PlusIcon /></Tool>
          <Tool label="偏置曲线"><OffsetIcon /></Tool>
          <Drop />
          <Tool label="投影曲线"><ProjectIcon /></Tool>
          <Sep />
          <Tool label="快速修剪"><TrimIcon /></Tool>
          <Drop />
          <Sep />
          <Tool label="快速尺寸"><RapidDimIcon /></Tool>
          <Drop />
          <Sep />
          <Tool label="几何约束"><ConstraintIcon /></Tool>
          <Tool label="设为对称"><SymmetricIcon /></Tool>
          <Tool label="显示约束" on><ConstraintIcon dark /></Tool>
          <Drop />
          <Tool label="定向草图"><SheetIcon /></Tool>
          <Drop low />
        </div>
      </div>

      {/* selection bar */}
      <div className="flex h-[35px] shrink-0 items-center pl-[5px]">
        <Combo label="过滤器" value="无选择过滤器" className="mr-[7px] w-[167px]" />
        <Combo label="范围" value="整个装配" className="mr-0.5 w-44" />
        <Snap label="组件"><FilterCubesIcon /></Snap>
        <Sep />
        <Snap label="重置"><FilterIcon /></Snap>
        <Snap label="过滤"><FilterRedIcon /></Snap>
        <Drop />
        <Snap label="恢复"><FilterUndoIcon /></Snap>
        <Sep />
        <Snap label="框选"><LassoIcon /></Snap>
        <Drop />
        <div className="mr-px h-7 w-px shrink-0 bg-[#dcdcdc]" />
        <Snap label="面" on><FaceIcon /></Snap>
        <Snap label="体"><ShadedIcon /></Snap>
        <Sep />
        <Snap label="捕捉点" on><SnapAllIcon /></Snap>
        <Snap label="端点" on><SnapLine at={[16, 5]} /></Snap>
        <Snap label="中点" on><SnapLine at={[10, 11]} /></Snap>
        <Snap label="控制点"><SnapCurveIcon /></Snap>
        <Snap label="极点" on><SnapPolyIcon /></Snap>
        <Snap label="样条点" on><SnapSplineIcon /></Snap>
        <Snap label="交点"><SnapCrossIcon /></Snap>
        <Snap label="圆心" on><SnapCenterIcon /></Snap>
        <Snap label="象限点"><SnapQuadIcon /></Snap>
        <Snap label="现有点" on><SnapPointIcon /></Snap>
        <Snap label="曲线上的点" on><SnapLine at={[6, 15]} /></Snap>
        <Snap label="面上的点"><SnapFaceIcon /></Snap>
        <Sep />
        <Snap label="栅格"><GridIcon /></Snap>
        <div className="ml-auto mr-1">
          <Drop low />
        </div>
      </div>

      <main className="flex min-h-0 flex-1 border-y border-[#8c8c8c]">
        <aside className="flex w-8 shrink-0 flex-col border-r border-[#b4b4b4] bg-[#dadada]">
          {railItems.map((r) => (
            <button
              key={r.label}
              title={r.label}
              className={clsx(
                "flex shrink-0 items-center justify-center",
                r.className,
                r.active ? "-mr-px ml-0.5 border border-r-0 border-[#b4b4b4] bg-white" : "pl-[3px]"
              )}
            >
              {r.icon}
            </button>
          ))}
        </aside>
        <Navigator />
        <Graphics />
      </main>

      <div className="relative flex h-[23px] shrink-0 items-center bg-white pl-[3px] text-sm font-semibold text-[#111]">
        <p className="whitespace-pre">选择对象并使用 MB3，双击，按下左键并拖动来移动，或按住 Ctrl 键...   草图已完全约束</p>
        <ImeBar />
      </div>

      <Taskbar />

      {/* recording timer */}
      <div className="absolute -right-3.5 top-[89px] flex h-[60px] w-[62px] items-center rounded-full border-3 border-white bg-linear-to-br from-[#3a8cf0] to-[#48b4fa] pl-1.5 text-base text-white shadow-md">
        00:00
      </div>
    </div>
  );
};

export default App;
